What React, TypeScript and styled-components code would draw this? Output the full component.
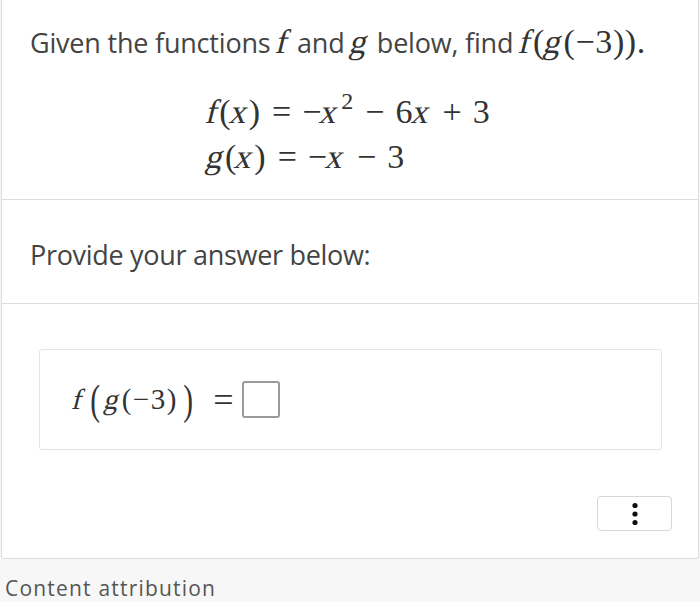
import React from 'react';
import styled, { createGlobalStyle } from 'styled-components';

const Global = createGlobalStyle`
  html, body {
    margin: 0;
    padding: 0;
    background: #f7f7f7;
  }
`;

const Page = styled.div`
  width: 700px;
  height: 602px;
  overflow: hidden;
  background: #f7f7f7;
  font-family: 'Open Sans', 'Liberation Sans', sans-serif;
  color: #444;
`;

const Card = styled.div`
  margin: 0 1px;
  background: #fff;
  border: 1px solid #dcdcdc;
  border-top: none;
  border-radius: 0 0 3px 3px;
`;

const Section = styled.div<{ $h: number }>`
  display: flow-root;
  height: ${(p) => p.$h}px;
  box-sizing: border-box;
  border-bottom: 1px solid #dcdcdc;
  padding: 0 28px;
  &:last-child {
    border-bottom: none;
  }
`;

const Prompt = styled.p`
  margin: 0;
  padding-top: 24px;
  font-size: 27px;
  line-height: 36px;
  letter-spacing: -0.2px;
`;

const Serif = styled.span`
  font-family: 'Liberation Serif', 'Times New Roman', serif;
  font-size: 34px;
  letter-spacing: 0.6px;
  color: #333;
`;

// serif italic face is missing, so slant the roman glyph
const I = styled.span`
  display: inline-block;
  font-style: normal;
  transform: skewX(-14deg);
  margin-right: 1px;
`;

const Equations = styled.div`
  margin-top: 28px;
  padding-left: 177px;
  font-family: 'Liberation Serif', 'Times New Roman', serif;
  font-size: 34px;
  line-height: 45px;
  color: #333;
`;

const Op = styled.span`
  margin: 0 11px 0 12px;
`;

const Sup = styled.sup`
  font-size: 24px;
  line-height: 0;
  vertical-align: 14px;
  margin-left: 2px;
`;

const AnswerLabel = styled.p`
  margin: 0;
  padding-top: 37px;
  font-size: 27px;
  line-height: 36px;
  letter-spacing: -0.3px;
`;

const AnswerBox = styled.div`
  margin: 45px 8px 0 9px;
  height: 101px;
  box-sizing: border-box;
  border: 1px solid #e4e4e4;
  border-radius: 3px;
  display: flex;
  align-items: center;
  padding-left: 33px;
`;

const Tex = styled.span`
  font-family: 'Liberation Serif', 'Times New Roman', serif;
  font-size: 29px;
  color: #333;
  display: flex;
  align-items: center;
  letter-spacing: 1.5px;
`;

const Big = styled.span`
  font-size: 42px;
  line-height: 1;
  display: inline-block;
  transform: scaleX(0.7);
  margin: 0 1px 0 3px;
`;

const Eq = styled.span`
  font-size: 36px;
  margin: 0 7px 0 16px;
`;

const Blank = styled.span`
  display: inline-block;
  width: 38px;
  height: 37px;
  box-sizing: border-box;
  border: 2px solid #9a9a9a;
  border-radius: 3px;
`;

const Footer = styled.div`
  display: flex;
  justify-content: flex-end;
  margin-top: 46px;
  margin-right: -2px;
`;

const MoreButton = styled.button`
  width: 75px;
  height: 35px;
  background: #fff;
  border: 1px solid #d8d8d8;
  border-radius: 4px;
  display: flex;
  align-items: center;
  justify-content: center;
  padding: 0;
`;

const Attribution = styled.div`
  padding: 16px 5px 0;
  font-family: 'Open Sans', 'DejaVu Sans', sans-serif;
  font-size: 21px;
  line-height: 26px;
  letter-spacing: 1.2px;
  color: #555;
`;

export default function App() {
  return (
    <Page>
      <Global />
      <Card>
        <Section $h={200}>
          <Prompt>
            Given the functions{' '}
            <Serif>
              <I>f</I>
            </Serif>{' '}
            and{' '}
            <Serif>
              <I>g</I>
            </Serif>{' '}
            below, find{' '}
            <Serif>
              <I>f</I>(<I>g</I>(−3)).
            </Serif>
          </Prompt>
          <Equations>
            <div>
              <I>f</I>(<I>x</I>)<Op>=</Op>−<I>x</I>
              <Sup>2</Sup>
              <Op>−</Op>6<I>x</I>
              <Op>+</Op>3
            </div>
            <div>
              <I>g</I>(<I>x</I>)<Op>=</Op>−<I>x</I>
              <Op>−</Op>3
            </div>
          </Equations>
        </Section>
        <Section $h={104}>
          <AnswerLabel>Provide your answer below:</AnswerLabel>
        </Section>
        <Section $h={254}>
          <AnswerBox>
            <Tex>
              <I>f</I>
              <Big>(</Big>
              <I>g</I>(−3)
              <Big>)</Big>
              <Eq>=</Eq>
              <Blank />
            </Tex>
          </AnswerBox>
          <Footer>
            <MoreButton aria-label="more">
              <svg width="8" height="24" viewBox="0 0 8 24">
                <circle cx="4" cy="3.5" r="2.6" fill="#111" />
                <circle cx="4" cy="12" r="2.6" fill="#111" />
                <circle cx="4" cy="20.5" r="2.6" fill="#111" />
              </svg>
            </MoreButton>
          </Footer>
        </Section>
      </Card>
      <Attribution>Content attribution</Attribution>
    </Page>
  );
}
